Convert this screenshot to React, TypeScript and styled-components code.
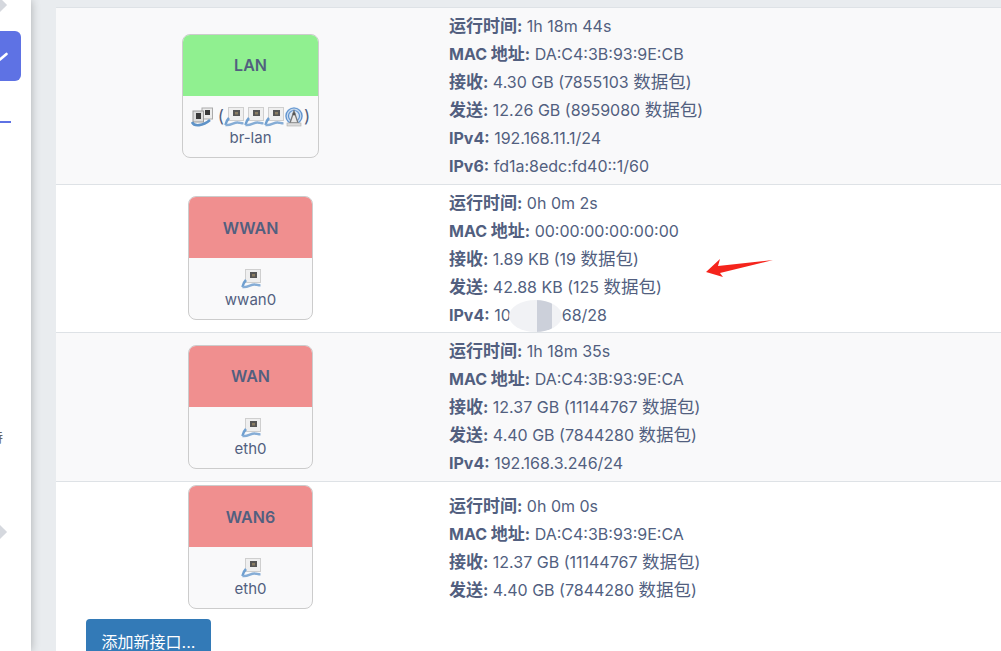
import React from 'react';
import styled, { createGlobalStyle } from 'styled-components';

const GlobalStyle = createGlobalStyle`
  html, body {
    margin: 0;
    padding: 0;
    height: 651px;
    overflow: hidden;
    background: #fff;
  }
  body {
    font-family: "Inter", "Noto Sans CJK SC", sans-serif;
    font-size: 16px;
    color: #525f7f;
  }
`;

const Page = styled.div`
  display: flex;
  width: 1001px;
  height: 651px;
  overflow: hidden;
  position: relative;
`;

const Sidebar = styled.aside`
  width: 31px;
  flex-shrink: 0;
  background: #fff;
  box-shadow: 0 0 10px rgba(0, 0, 0, 0.28);
  position: relative;
  z-index: 1;
`;

const ActiveItem = styled.div`
  width: 21px;
  height: 50px;
  margin-top: 21px;
  display: flex;
  align-items: center;
  background: #5e72e4;
  border-radius: 0 6px 6px 0;
`;

const SideLine = styled.div`
  width: 11px;
  height: 2px;
  margin-top: 40px;
  background: #5e72e4;
`;

const SideGlyph = styled.div`
  margin: 306px 0 0 -11px;
  width: 14px;
  height: 16px;
  overflow: hidden;
  font-size: 14px;
  line-height: 16px;
  color: #666;
`;

const Diamond = styled.div<{ $top: number }>`
  width: 10px;
  height: 10px;
  margin-left: -5px;
  margin-top: ${(p) => p.$top}px;
  background: #d5d8de;
  transform: rotate(45deg);
`;

const Gutter = styled.div`
  flex: 1;
  padding-left: 25px;
  background: #e9ecef;
  min-width: 0;
`;

const Table = styled.div`
  margin-top: 7px;
  background: #fff;
  border-top: 1px solid #dee2e6;
  min-height: 700px;
`;

const Row = styled.div<{ $alt?: boolean }>`
  display: grid;
  grid-template-columns: 389px 1fr;
  align-items: center;
  padding: 3.75px 0;
  background: ${(p) => (p.$alt ? '#f9f9fa' : '#fff')};
  border-bottom: 1px solid #dee2e6;

  &:last-of-type {
    border-bottom: none;
  }
`;

const CardCell = styled.div`
  display: flex;
  justify-content: center;
`;

const Card = styled.div`
  min-width: 123px;
  height: 122px;
  border: 1px solid #ccc;
  border-radius: 8px;
  overflow: hidden;
  background: #f9f9fa;
  display: flex;
  flex-direction: column;
`;

const CardHead = styled.div<{ $up?: boolean }>`
  height: 61px;
  display: flex;
  align-items: center;
  justify-content: center;
  background: ${(p) => (p.$up ? '#90f090' : '#f08f8f')};
  font-weight: 600;
  font-size: 16px;
`;

const CardBody = styled.div`
  flex: 1;
  padding: 11px 8px 0;
  display: flex;
  flex-direction: column;
  align-items: center;
  font-size: 15px;
  line-height: 21px;
`;

const IconRow = styled.div`
  height: 20px;
  display: flex;
  align-items: center;
  font-size: 17px;
`;

const SoftIcons = styled.span`
  display: flex;
  filter: blur(0.5px);
`;

const Lines = styled.div`
  margin: 0.5px 0 -0.5px;
  padding-left: 4px;
  line-height: 28px;
  font-size: 16px;
  white-space: nowrap;
`;

const Line = styled.div`
  height: 28px;
`;

const Cjk = styled.span`
  font-size: 17.5px;
`;

const Label = styled.strong`
  font-weight: 700;

  ${Cjk} {
    font-size: 17px;
  }
`;

const BlurredValue = styled.span`
  position: relative;
  display: inline-block;
`;

const MaskedPart = styled.span`
  display: inline-block;
  width: 51px;
`;

const BlurPatch = styled.span`
  position: absolute;
  left: 15px;
  top: -1px;
  width: 53px;
  height: 32px;
  border-radius: 50%;
  background: linear-gradient(90deg, #f1f2f5 0 53%, #ccd0da 53% 82%, #f1f2f5 82%);
`;

const Arrow = styled.svg`
  position: absolute;
  left: 706px;
  top: 258px;
  z-index: 2;
`;

const AddButton = styled.button`
  margin: 6px 0 0 30px;
  width: 125px;
  height: 44px;
  display: block;
  border: none;
  border-radius: 4px;
  background: #337ab7;
  color: #fff;
  font-family: inherit;
  font-size: 16px;
`;

const CheckIcon = () => (
  <svg width="8" height="9" viewBox="0 0 8 9">
    <path d="M0 7.5 L6.5 2" stroke="#fff" strokeWidth="2.6" strokeLinecap="round" fill="none" />
  </svg>
);

// network port with a blue cable, same look as the luci ethernet icon
const PortIcon = () => (
  <svg width="20" height="20" viewBox="0 0 20 20">
    <rect x="4.5" y="0.5" width="15" height="13" fill="#efefef" stroke="#cfcfcf" />
    <rect x="9" y="3" width="7" height="6" fill="#555" />
    <rect x="11" y="5" width="3" height="2.5" fill="#8a7d63" />
    <path d="M5 11 C3 13 2 15 1.5 18" stroke="#6f9fd0" strokeWidth="2.6" fill="none" />
    <path d="M1.5 18 C7 19 10 15 14 15.5 C16 15.7 17 16.4 19.5 16.4" stroke="#86add6" strokeWidth="2.4" fill="none" />
  </svg>
);

const BridgeIcon = () => (
  <svg width="22" height="20" viewBox="0 0 22 20">
    <rect x="11" y="1" width="10.5" height="11" fill="#ececec" stroke="#aaa" />
    <rect x="14" y="3" width="5" height="5" fill="#3a3a3a" />
    <rect x="2" y="4" width="10.5" height="11" fill="#dddddd" stroke="#999" />
    <rect x="5" y="6" width="5" height="6" fill="#3a3a3a" />
    <path d="M1 15 C3 20 12 19 19 13" stroke="#5f93c8" strokeWidth="2.6" fill="none" />
  </svg>
);

const WifiIcon = () => (
  <svg width="20" height="20" viewBox="0 0 20 20">
    <circle cx="10" cy="9" r="9" fill="#c6d9ee" />
    <circle cx="10" cy="9" r="8" fill="none" stroke="#5f93cf" strokeWidth="1.2" />
    <circle cx="10" cy="9" r="5.5" fill="#dbe7f4" stroke="#5f93cf" strokeWidth="1.2" />
    <path d="M10 4 L6 16 H14 Z" fill="#e8e8e8" stroke="#777" strokeWidth="1.3" />
    <circle cx="10" cy="7" r="1.4" fill="#555" />
    <rect x="3" y="16" width="14" height="3" fill="#dcdcdc" stroke="#aaa" strokeWidth="0.6" />
  </svg>
);

// chinese runs sit a bit larger than the latin text in the reference
const withCjk = (text: string) =>
  text.split(/([\u4e00-\u9fff]+)/).map((part, i) => (i % 2 ? <Cjk key={i}>{part}</Cjk> : part));

type Stat = { label: string; value: React.ReactNode };

type Iface = {
  name: string;
  device: string;
  up?: boolean;
  bridge?: boolean;
  stats: Stat[];
};

const blurredIp = (
  <BlurredValue>
    10
    <MaskedPart />
    68/28
    <BlurPatch />
  </BlurredValue>
);

const ifaces: Iface[] = [
  {
    name: 'LAN',
    device: 'br-lan',
    up: true,
    bridge: true,
    stats: [
      { label: '运行时间:', value: '1h 18m 44s' },
      { label: 'MAC 地址:', value: 'DA:C4:3B:93:9E:CB' },
      { label: '接收:', value: '4.30 GB (7855103 数据包)' },
      { label: '发送:', value: '12.26 GB (8959080 数据包)' },
      { label: 'IPv4:', value: '192.168.11.1/24' },
      { label: 'IPv6:', value: 'fd1a:8edc:fd40::1/60' },
    ],
  },
  {
    name: 'WWAN',
    device: 'wwan0',
    stats: [
      { label: '运行时间:', value: '0h 0m 2s' },
      { label: 'MAC 地址:', value: '00:00:00:00:00:00' },
      { label: '接收:', value: '1.89 KB (19 数据包)' },
      { label: '发送:', value: '42.88 KB (125 数据包)' },
      { label: 'IPv4:', value: blurredIp },
    ],
  },
  {
    name: 'WAN',
    device: 'eth0',
    stats: [
      { label: '运行时间:', value: '1h 18m 35s' },
      { label: 'MAC 地址:', value: 'DA:C4:3B:93:9E:CA' },
      { label: '接收:', value: '12.37 GB (11144767 数据包)' },
      { label: '发送:', value: '4.40 GB (7844280 数据包)' },
      { label: 'IPv4:', value: '192.168.3.246/24' },
    ],
  },
  {
    name: 'WAN6',
    device: 'eth0',
    stats: [
      { label: '运行时间:', value: '0h 0m 0s' },
      { label: 'MAC 地址:', value: 'DA:C4:3B:93:9E:CA' },
      { label: '接收:', value: '12.37 GB (11144767 数据包)' },
      { label: '发送:', value: '4.40 GB (7844280 数据包)' },
    ],
  },
];

export default function App() {
  return (
    <Page>
      <GlobalStyle />
      <Sidebar>
        <Diamond $top={0} />
        <ActiveItem>
          <CheckIcon />
        </ActiveItem>
        <SideLine />
        <SideGlyph>特</SideGlyph>
        <Diamond $top={82} />
      </Sidebar>
      <Gutter>
        <Table>
          {ifaces.map((iface, i) => (
            <Row key={iface.name} $alt={i % 2 === 0}>
              <CardCell>
                <Card>
                  <CardHead $up={iface.up}>{iface.name}</CardHead>
                  <CardBody>
                    <IconRow>
                      {iface.bridge ? (
                        <>
                          <SoftIcons>
                            <BridgeIcon />
                          </SoftIcons>
                          &nbsp;(
                          <SoftIcons>
                            <PortIcon />
                            <PortIcon />
                            <PortIcon />
                            <WifiIcon />
                          </SoftIcons>
                          )
                        </>
                      ) : (
                        <SoftIcons>
                          <PortIcon />
                        </SoftIcons>
                      )}
                    </IconRow>
                    {iface.device}
                  </CardBody>
                </Card>
              </CardCell>
              <Lines>
                {iface.stats.map((s) => (
                  <Line key={s.label}>
                    <Label>{withCjk(s.label)}</Label>{' '}
                    {typeof s.value === 'string' ? withCjk(s.value) : s.value}
                  </Line>
                ))}
              </Lines>
            </Row>
          ))}
          <AddButton>添加新接口...</AddButton>
        </Table>
      </Gutter>
      <Arrow width="68" height="22" viewBox="0 0 68 22">
        <path d="M0 14 L14 1 L12 8 L67 2 L14 15 L17 19 Z" fill="#f5241c" />
      </Arrow>
    </Page>
  );
}
